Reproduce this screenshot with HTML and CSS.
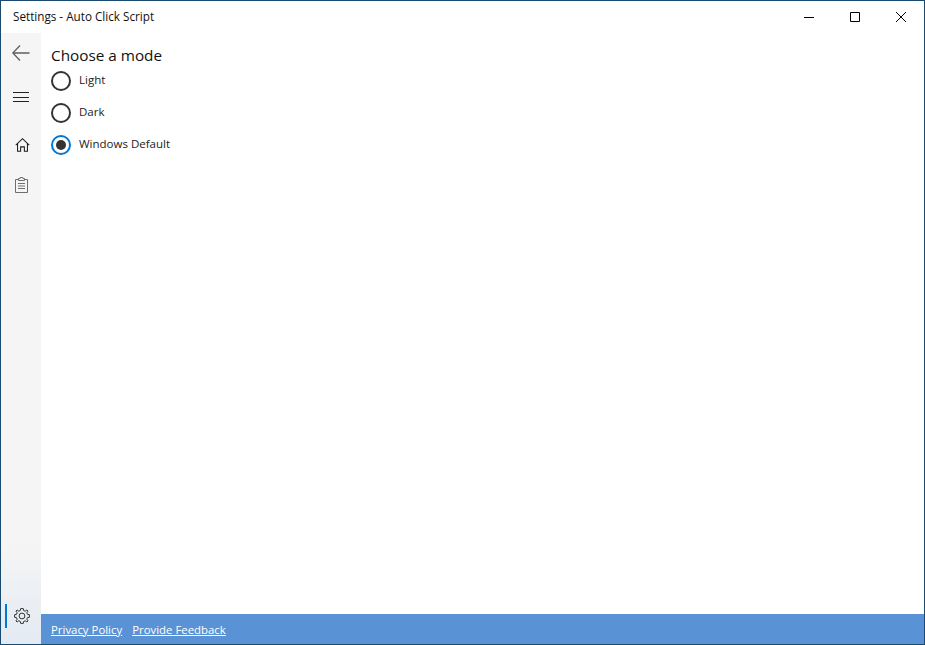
FILE: index.html
```html
<!DOCTYPE html>
<html lang="en">
<head>
<meta charset="utf-8">
<title>Settings - Auto Click Script</title>
<link rel="stylesheet" href="styles.css">
</head>
<body>
<div class="window">
  <header class="titlebar">
    <span class="title">Settings - Auto Click Script</span>
    <div class="controls">
      <button class="ctrl"><svg width="10" height="10" viewBox="0 0 10 10"><path d="M0 5.5H10" stroke="#000" fill="none"/></svg></button>
      <button class="ctrl"><svg width="10" height="10" viewBox="0 0 10 10"><path d="M.5.5H9.5V9.5H.5Z" stroke="#000" fill="none"/></svg></button>
      <button class="ctrl"><svg width="10" height="10" viewBox="0 0 10 10"><path d="M0 0L10 10M10 0L0 10" stroke="#000" stroke-width="1" fill="none"/></svg></button>
    </div>
  </header>
  <div class="body">
    <nav class="nav">
      <div class="nav-top">
        <div class="nav-item back"><svg width="18" height="16" viewBox="0 0 18 16"><path d="M8 .5L.8 8L8 15.5M.8 8H17.5" stroke="#5f5f5f" stroke-width="1.3" fill="none"/></svg></div>
        <div class="nav-item menu"><svg width="16" height="10" viewBox="0 0 16 10"><path d="M0 .5H16M0 5.5H16M0 9.5H16" stroke="#222" fill="none"/></svg></div>
        <div class="nav-item home"><svg width="15" height="14" viewBox="0 0 16 15"><path d="M.8 7.6L8 .8L15.2 7.6M2.7 6V14.2H6V9.5H10V14.2H13.3V6" stroke="#1a1a1a" stroke-width="1.1" fill="none"/></svg></div>
        <div class="nav-item clip"><svg width="13" height="16" viewBox="0 0 13 16"><path d="M3.5 2.5H.5V15.5H12.5V2.5H9.5M3.5 3.5V1.5H5.2V.5H7.8V1.5H9.5V3.5ZM3 6.5H10M3 9H10M3 11.5H10" stroke="#6e6e6e" fill="none"/></svg></div>
      </div>
      <div class="nav-item settings">
        <span class="indicator"></span>
        <svg width="16" height="16" viewBox="0 0 16 16"><path d="M6.7.6H9.3L9.7 2.6L11.2 3.2L12.9 2L14 3.1L12.8 4.9L13.4 6.3L15.4 6.7V9.3L13.4 9.7L12.8 11.1L14 12.9L12.9 14L11.2 12.8L9.7 13.4L9.3 15.4H6.7L6.3 13.4L4.8 12.8L3.1 14L2 12.9L3.2 11.1L2.6 9.7L.6 9.3V6.7L2.6 6.3L3.2 4.9L2 3.1L3.1 2L4.8 3.2L6.3 2.6Z" stroke="#333" stroke-width="1" fill="none"/><circle cx="8" cy="8" r="2.9" stroke="#333" stroke-width="1" fill="none"/></svg>
      </div>
    </nav>
    <div class="main">
      <section class="content">
        <h1 class="heading">Choose a mode</h1>
        <div class="radios">
          <label class="radio"><span class="ring"></span><span class="label">Light</span></label>
          <label class="radio"><span class="ring"></span><span class="label">Dark</span></label>
          <label class="radio"><span class="ring on"><span class="dot"></span></span><span class="label">Windows Default</span></label>
        </div>
      </section>
      <footer class="footer">
        <a class="link">Privacy Policy</a>
        <a class="link">Provide Feedback</a>
      </footer>
    </div>
  </div>
</div>
</body>
</html>
```
FILE: styles.css
```css
* { box-sizing: border-box; }
html, body { margin: 0; height: 100%; }
body { font-family: "Open Sans", "Liberation Sans", sans-serif; background: #fff; color: #1a1a1a; overflow: hidden; }
.window { width: 925px; height: 645px; border: 1px solid #1b4a70; display: flex; flex-direction: column; background: #fff; }
.titlebar { height: 32px; flex: none; display: flex; align-items: center; justify-content: space-between; padding-left: 12px; }
.title { font-size: 11.7px; color: #111; margin-top: -2px; }
.controls { display: flex; }
.ctrl { width: 46px; height: 32px; border: 0; background: none; padding: 0; display: flex; align-items: center; justify-content: center; }
.ctrl svg { display: block; }
.body { flex: 1; display: flex; min-height: 0; }
.nav { width: 40px; flex: none; display: flex; flex-direction: column; justify-content: space-between; background: linear-gradient(to bottom, #f5f5f5 0, #f5f5f5 84%, #e3eaf3 100%); }
.nav-top { display: flex; flex-direction: column; }
.nav-item { height: 40px; display: flex; align-items: center; justify-content: center; position: relative; }
.nav-item svg { display: block; }
.back { margin-bottom: 4px; }
.home { margin-top: 8px; padding-left: 2px; }
.clip { padding-left: 1px; }
.settings { height: 30px; margin-bottom: 13px; padding-left: 2px; }
.indicator { position: absolute; left: 4px; top: 3px; width: 2px; height: 24px; background: #0078d7; }
.main { flex: 1; display: flex; flex-direction: column; min-width: 0; }
.content { flex: 1; padding: 12px 0 0 10px; }
.heading { margin: 0; font-size: 15.3px; font-weight: 400; line-height: 21px; color: #111; }
.radios { display: flex; flex-direction: column; margin-top: 2px; }
.radio { height: 32px; display: flex; align-items: flex-start; padding-top: 1px; }
.ring { width: 20px; height: 20px; border: 2px solid #333; border-radius: 50%; display: flex; align-items: center; justify-content: center; flex: none; margin-top: 2px; }
.ring.on { border-color: #0078d7; }
.dot { width: 10px; height: 10px; border-radius: 50%; background: #333; }
.label { font-size: 11.5px; line-height: 16px; margin: 3px 0 0 8px; color: #222; }
.footer { height: 30px; flex: none; background: #5a92d6; display: flex; align-items: center; gap: 10px; padding-left: 10px; }
.link { font-size: 11.4px; color: #fff; text-decoration: underline; }
```
